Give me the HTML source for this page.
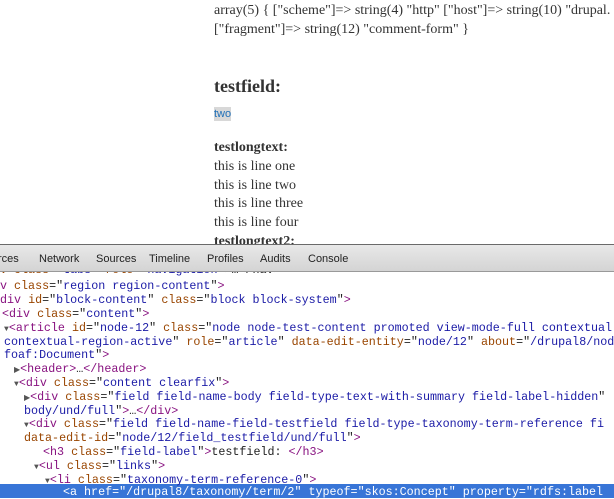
<!DOCTYPE html>
<html><head><style>
body{margin:0;width:614px;height:497px;overflow:hidden;background:#fff;position:relative;font-family:"Liberation Serif",serif;}
.pg{position:absolute;left:214px;color:#333;font-size:14px;white-space:nowrap}
.tb{position:absolute;z-index:2;top:244px;left:0;width:614px;height:28px;background:linear-gradient(#e8e8e8,#d4d4d4);border-top:1px solid #6a6a6a;border-bottom:1px solid #999;box-sizing:border-box;font-family:"Liberation Sans",sans-serif;font-size:11px;color:#222}
.tb span{position:absolute;top:8px}
.dt{position:absolute;left:0;top:274px;width:614px;font-family:"Liberation Mono",monospace;font-size:11.7px;white-space:nowrap;color:#222}
.l{position:absolute;height:14px;line-height:14px}
.t{color:#881280}.a{color:#994500}.v{color:#1a1aa6}
.sel{position:absolute;left:0;top:484px;width:614px;height:14px;background:#3875d7}
.tri{font-size:8px;color:#555}
</style></head><body>
<div class="pg" style="top:3px">array(5) { ["scheme"]=&gt; string(4) "http" ["host"]=&gt; string(10) "drupal.</div>
<div class="pg" style="top:22px">["fragment"]=&gt; string(12) "comment-form" }</div>
<div class="pg" style="top:76px;font-size:18px;font-weight:bold">testfield:</div>
<div style="position:absolute;left:214px;top:107px;width:17px;height:14px;background:#d8d8d8"></div>
<div class="pg" style="top:108px;font-family:'Liberation Sans',sans-serif;font-size:11px;color:#1e6fb8">two</div>
<div class="pg" style="top:140px;font-weight:bold">testlongtext:</div>
<div class="pg" style="top:159px">this is line one</div>
<div class="pg" style="top:178px">this is line two</div>
<div class="pg" style="top:196px">this is line three</div>
<div class="pg" style="top:215px">this is line four</div>
<div class="pg" style="top:234px;font-weight:bold">testlongtext2:</div>
<div class="tb"><span style="left:-2px">rces</span><span style="left:39px">Network</span><span style="left:96px">Sources</span><span style="left:149px">Timeline</span><span style="left:207px">Profiles</span><span style="left:260px">Audits</span><span style="left:308px">Console</span></div>
<div class="sel"></div>
<div class="dt">
<div class="l" style="top:-11px;left:0"><span class="a">v class</span>="<span class="v">tabs</span>" <span class="a">role</span>="<span class="v">navigation</span>"&gt;…&lt;/nav&gt;</div>
<div class="l" style="top:5px;left:0"><span class="t">v</span> <span class="a">class</span>="<span class="v">region region-content</span>"<span class="t">&gt;</span></div>
<div class="l" style="top:19px;left:0"><span class="t">div</span> <span class="a">id</span>="<span class="v">block-content</span>" <span class="a">class</span>="<span class="v">block block-system</span>"<span class="t">&gt;</span></div>
<div class="l" style="top:33px;left:2px"><span class="t">&lt;div</span> <span class="a">class</span>="<span class="v">content</span>"<span class="t">&gt;</span></div>
<div class="l" style="top:47px;left:4px"><span class="tri">▼</span><span class="t">&lt;article</span> <span class="a">id</span>="<span class="v">node-12</span>" <span class="a">class</span>="<span class="v">node node-test-content promoted view-mode-full contextual</span></div>
<div class="l" style="top:61px;left:4px"><span class="v">contextual-region-active</span>" <span class="a">role</span>="<span class="v">article</span>" <span class="a">data-edit-entity</span>="<span class="v">node/12</span>" <span class="a">about</span>="<span class="v">/drupal8/nod</span></div>
<div class="l" style="top:74px;left:4px"><span class="v">foaf:Document</span>"<span class="t">&gt;</span></div>
<div class="l" style="top:88px;left:14px"><span class="tri">▶</span><span class="t">&lt;header&gt;</span>…<span class="t">&lt;/header&gt;</span></div>
<div class="l" style="top:102px;left:14px"><span class="tri">▼</span><span class="t">&lt;div</span> <span class="a">class</span>="<span class="v">content clearfix</span>"<span class="t">&gt;</span></div>
<div class="l" style="top:116px;left:24px"><span class="tri">▶</span><span class="t">&lt;div</span> <span class="a">class</span>="<span class="v">field field-name-body field-type-text-with-summary field-label-hidden</span>"</div>
<div class="l" style="top:130px;left:24px"><span class="v">body/und/full</span>"<span class="t">&gt;</span>…<span class="t">&lt;/div&gt;</span></div>
<div class="l" style="top:143px;left:24px"><span class="tri">▼</span><span class="t">&lt;div</span> <span class="a">class</span>="<span class="v">field field-name-field-testfield field-type-taxonomy-term-reference fi</span></div>
<div class="l" style="top:157px;left:24px"><span class="a">data-edit-id</span>="<span class="v">node/12/field_testfield/und/full</span>"<span class="t">&gt;</span></div>
<div class="l" style="top:171px;left:43px"><span class="t">&lt;h3</span> <span class="a">class</span>="<span class="v">field-label</span>"<span class="t">&gt;</span>testfield: <span class="t">&lt;/h3&gt;</span></div>
<div class="l" style="top:185px;left:34px"><span class="tri">▼</span><span class="t">&lt;ul</span> <span class="a">class</span>="<span class="v">links</span>"<span class="t">&gt;</span></div>
<div class="l" style="top:199px;left:45px"><span class="tri">▼</span><span class="t">&lt;li</span> <span class="a">class</span>="<span class="v">taxonomy-term-reference-0</span>"<span class="t">&gt;</span></div>
<div class="l" style="top:211px;left:63px;color:#fff">&lt;a href="/drupal8/taxonomy/term/2" typeof="skos:Concept" property="rdfs:label</div>
</div>
</body></html>
